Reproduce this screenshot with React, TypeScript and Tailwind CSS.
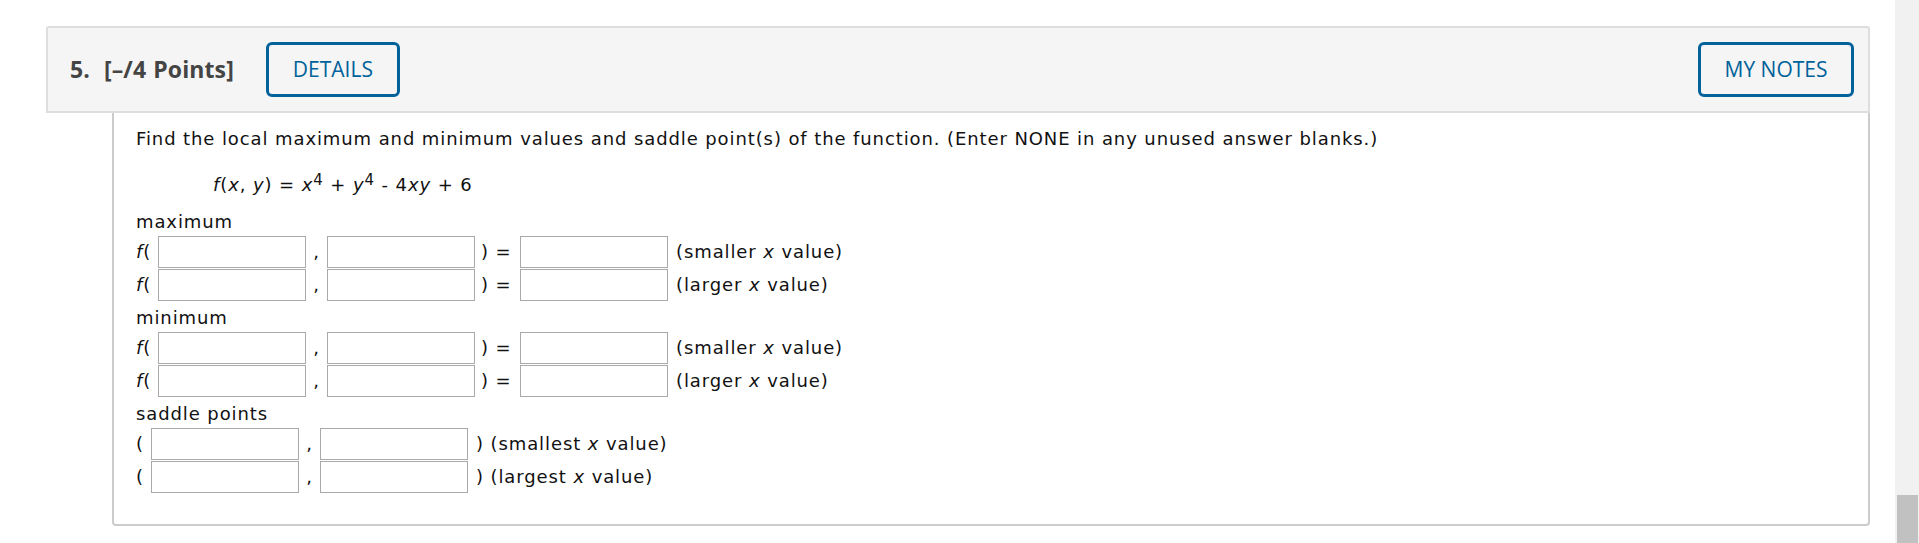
import React from 'react';

const verdana = { fontFamily: '"DejaVu Sans", Verdana, sans-serif' };

function Box({ w = 'w-[148px]' }: { w?: string }) {
  return <input type="text" className={`${w} h-[32px] border border-[#a9a9a9] bg-white outline-none`} />;
}

function FRow({ note }: { note: React.ReactNode }) {
  return (
    <div className="flex h-[33px] items-start">
      <span className="w-[22px] leading-[32px]">
        <i>f</i>(
      </span>
      <Box />
      <span className="w-[21px] text-center leading-[32px]">,</span>
      <Box />
      <span className="w-[45px] pl-[6px] leading-[32px]">)&nbsp;=</span>
      <Box />
      <span className="pl-[8px] leading-[32px]">{note}</span>
    </div>
  );
}

function PairRow({ note }: { note: React.ReactNode }) {
  return (
    <div className="flex h-[33px] items-start">
      <span className="w-[15px] leading-[32px]">(</span>
      <Box />
      <span className="w-[21px] text-center leading-[32px]">,</span>
      <Box />
      <span className="pl-[8px] leading-[32px]">)&nbsp;{note}</span>
    </div>
  );
}

export default function App() {
  return (
    <div className="flex h-[543px] overflow-hidden bg-white">
      <div className="flex-1 pl-[46px] pr-[25px] pt-[26px]">
        <div
          className="flex h-[87px] items-center justify-between rounded-t-[3px] border-2 border-[#dedede] bg-[#f5f5f5] pl-[22px] pr-[14px]"
          style={{ fontFamily: '"Open Sans", sans-serif' }}
        >
          <div className="flex items-center gap-[32px]">
            <h2 className="text-[23px] font-bold tracking-[0.1px] text-[#444] [word-spacing:1px]">5.&nbsp; [–/4 Points]</h2>
            <button className="h-[55px] w-[134px] rounded-[6px] border-[3px] border-[#00629b] text-[21px] font-medium text-[#00629b]">
              DETAILS
            </button>
          </div>
          <button className="h-[55px] w-[156px] rounded-[6px] border-[3px] border-[#00629b] text-[21px] font-medium text-[#00629b]">
            MY NOTES
          </button>
        </div>

        <div
          className="ml-[66px] rounded-b-[4px] border-2 border-t-0 border-[#cccccc] pb-[30px] pl-[22px] pt-[11px] text-[18px] tracking-[0.9px] text-[#111]"
          style={verdana}
        >
          <p className="leading-[30px]">
            Find the local maximum and minimum values and saddle point(s) of the function. (Enter NONE in any unused answer blanks.)
          </p>
          <p className="mt-[16px] pl-[77px] leading-[30px]">
            <i>f</i>(<i>x</i>, <i>y</i>) = <i>x</i>
            <sup className="-top-[6px] text-[15px]">4</sup> + <i>y</i>
            <sup className="-top-[6px] text-[15px]">4</sup> - 4<i>xy</i> + 6
          </p>

          <div className="mt-[6px] pt-[2px] leading-[28px]">maximum</div>
          <FRow note={<>(smaller <i>x</i> value)</>} />
          <FRow note={<>(larger <i>x</i> value)</>} />

          <div className="pt-[2px] leading-[28px]">minimum</div>
          <FRow note={<>(smaller <i>x</i> value)</>} />
          <FRow note={<>(larger <i>x</i> value)</>} />

          <div className="pt-[2px] leading-[28px]">saddle points</div>
          <PairRow note={<>(smallest <i>x</i> value)</>} />
          <PairRow note={<>(largest <i>x</i> value)</>} />
        </div>
      </div>

      <div className="flex w-[24px] flex-col justify-end bg-[#f1f1f1]">
        <div className="ml-[2px] mr-[1px] h-[48px] bg-[#c1c1c1]" />
      </div>
    </div>
  );
}
